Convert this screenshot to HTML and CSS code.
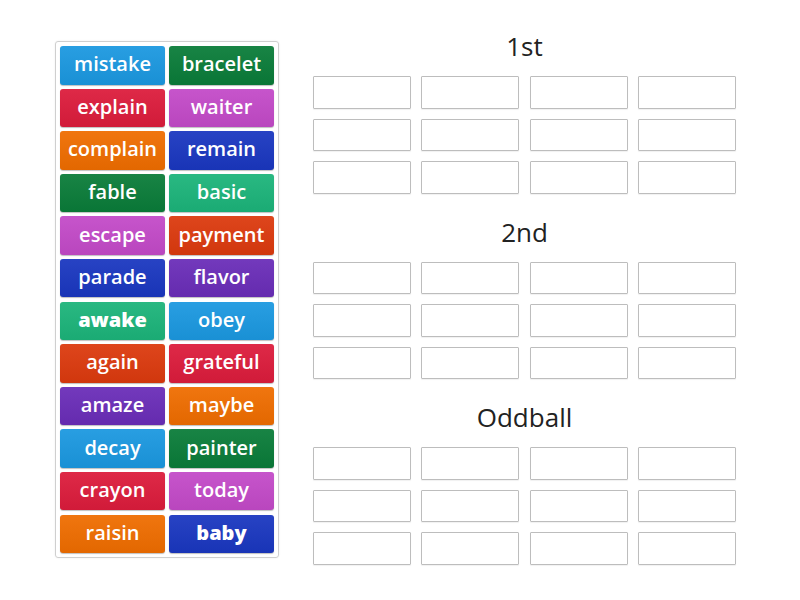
FILE: index.html
```html
<!DOCTYPE html>
<html>
<head>
<meta charset="utf-8">
<link rel="stylesheet" href="styles.css">
</head>
<body>
<div class="page">
  <div class="bank">
    <div class="tile blue">mistake</div>
    <div class="tile green">bracelet</div>
    <div class="tile red">explain</div>
    <div class="tile pink">waiter</div>
    <div class="tile orange">complain</div>
    <div class="tile navy">remain</div>
    <div class="tile green">fable</div>
    <div class="tile teal">basic</div>
    <div class="tile pink">escape</div>
    <div class="tile rust">payment</div>
    <div class="tile navy">parade</div>
    <div class="tile purple">flavor</div>
    <div class="tile teal heavy">awake</div>
    <div class="tile blue">obey</div>
    <div class="tile rust">again</div>
    <div class="tile red">grateful</div>
    <div class="tile purple">amaze</div>
    <div class="tile orange">maybe</div>
    <div class="tile blue">decay</div>
    <div class="tile green">painter</div>
    <div class="tile red">crayon</div>
    <div class="tile pink">today</div>
    <div class="tile orange">raisin</div>
    <div class="tile navy heavy">baby</div>
  </div>
  <div class="groups">
    <section class="group">
      <h2 class="title">1st</h2>
      <div class="slots">
        <div class="slot"></div><div class="slot"></div><div class="slot"></div><div class="slot"></div>
        <div class="slot"></div><div class="slot"></div><div class="slot"></div><div class="slot"></div>
        <div class="slot"></div><div class="slot"></div><div class="slot"></div><div class="slot"></div>
      </div>
    </section>
    <section class="group">
      <h2 class="title">2nd</h2>
      <div class="slots">
        <div class="slot"></div><div class="slot"></div><div class="slot"></div><div class="slot"></div>
        <div class="slot"></div><div class="slot"></div><div class="slot"></div><div class="slot"></div>
        <div class="slot"></div><div class="slot"></div><div class="slot"></div><div class="slot"></div>
      </div>
    </section>
    <section class="group">
      <h2 class="title">Oddball</h2>
      <div class="slots">
        <div class="slot"></div><div class="slot"></div><div class="slot"></div><div class="slot"></div>
        <div class="slot"></div><div class="slot"></div><div class="slot"></div><div class="slot"></div>
        <div class="slot"></div><div class="slot"></div><div class="slot"></div><div class="slot"></div>
      </div>
    </section>
  </div>
</div>
</body>
</html>
```

FILE: styles.css
```css
html, body {
  margin: 0;
  padding: 0;
  background: #ffffff;
}

body {
  width: 800px;
  height: 600px;
  overflow: hidden;
  font-family: "Open Sans", "Liberation Sans", sans-serif;
}

.page {
  display: flex;
  align-items: flex-start;
  padding-left: 55px;
  gap: 34px;
}

.bank {
  margin-top: 41px;
  width: 214px;
  padding: 4px;
  border: 1px solid #cfcfcf;
  border-radius: 3px;
  display: grid;
  grid-template-columns: 105px 105px;
  grid-auto-rows: 38.5px;
  column-gap: 4px;
  row-gap: 4.1px;
  box-shadow: 0 0 2px rgba(0, 0, 0, 0.08);
}

.tile {
  display: flex;
  align-items: center;
  justify-content: center;
  border-radius: 3px;
  color: #ffffff;
  font-size: 20px;
  font-weight: 600;
  line-height: 1;
  padding-bottom: 2px;
  box-sizing: border-box;
  background-image: linear-gradient(rgba(255, 255, 255, 0.06), rgba(0, 0, 0, 0.05));
  box-shadow: 0 1px 1px rgba(0, 0, 0, 0.25);
}

.tile.heavy {
  font-weight: 800;
}

.blue   { background-color: #1b98e0; }
.green  { background-color: #0a7c39; }
.red    { background-color: #dc1c3c; }
.pink   { background-color: #c34ac8; }
.orange { background-color: #ef6d00; }
.navy   { background-color: #1a37c0; }
.teal   { background-color: #1cb47a; }
.rust   { background-color: #dc3a0e; }
.purple { background-color: #6a2db8; }

.groups {
  width: 423px;
  padding-top: 28px;
  display: flex;
  flex-direction: column;
  gap: 20px;
}

.group {
  display: flex;
  flex-direction: column;
  gap: 12px;
}

.title {
  margin: 0;
  font-size: 26px;
  font-weight: 400;
  line-height: 36px;
  color: #222222;
  text-align: center;
}

.slots {
  display: grid;
  grid-template-columns: repeat(4, 98px);
  grid-auto-rows: 32.5px;
  column-gap: 10.33px;
  row-gap: 10px;
}

.slot {
  border: 1px solid #bdbdbd;
  border-radius: 1px;
  box-shadow: 0 1px 1px rgba(0, 0, 0, 0.06);
}
```
